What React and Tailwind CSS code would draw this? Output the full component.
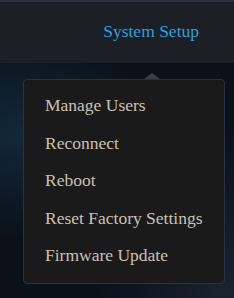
import React from "react";

const items = ["Manage Users", "Reconnect", "Reboot", "Reset Factory Settings", "Firmware Update"];

export default function App() {
  return (
    <div className="relative w-[234px] h-[298px] overflow-hidden bg-[#0a1119] font-['Liberation_Serif','Times_New_Roman',serif]">
      <div className="absolute inset-0 bg-[radial-gradient(ellipse_at_8%_45%,#12283a_0%,transparent_45%),radial-gradient(ellipse_at_95%_98%,#1a2230_0%,transparent_40%)]" />
      <header className="relative h-[63px] bg-[#1c1f26] border-t-2 border-[#2d2f3f] flex items-center justify-end pr-[35px]">
        <span className="text-[#2f9fdb] text-[17.5px] leading-none pb-[1px]">System Setup</span>
      </header>
      <div className="absolute left-[23px] top-[73px] w-[202px]">
        <div className="ml-[121px] w-0 h-0 border-l-[8px] border-r-[8px] border-b-[6px] border-l-transparent border-r-transparent border-b-[#3a3e47]" />
        <div className="bg-[#1a1a1b] border border-[#27314a] rounded-[4px] pt-[7px] pb-[8px]">
          {items.map((t) => (
            <div key={t} className="pl-[21px] h-[37.5px] flex items-center text-[17.5px] text-[#c9c2b3] leading-none">
              {t}
            </div>
          ))}
        </div>
      </div>
    </div>
  );
}
